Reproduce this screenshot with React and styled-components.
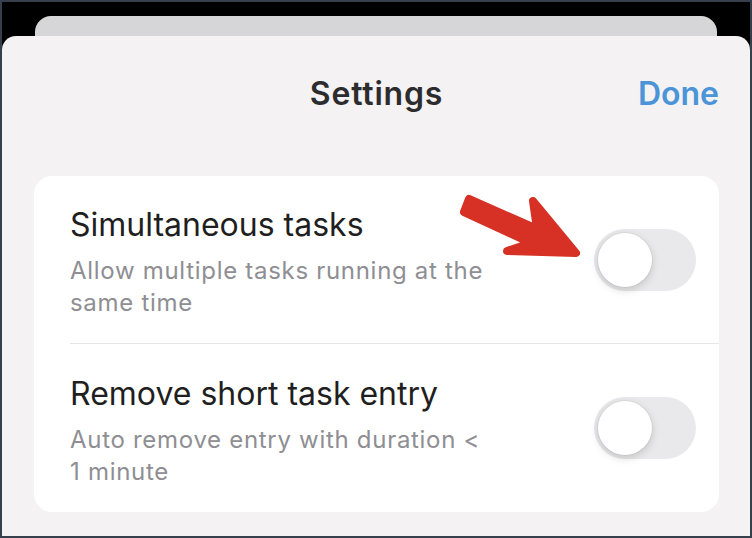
import styled, { createGlobalStyle } from "styled-components";

const GlobalStyle = createGlobalStyle`
  html, body { margin: 0; padding: 0; background: #36404c; }
  body { font-family: Inter, "Noto Sans", sans-serif; -webkit-font-smoothing: antialiased; }
`;

const Frame = styled.div`
  width: 752px; height: 538px; box-sizing: border-box;
  border: 2px solid #36404c;
  background: #000;
  display: flex; flex-direction: column;
  overflow: hidden;
`;

const BackCard = styled.div`
  height: 20px; margin: 14px 33px 0 33px;
  background: #d6d6d8;
  border-radius: 16px 16px 0 0;
`;

const Sheet = styled.div`
  flex: 1;
  background: #f4f2f3;
  border-radius: 14px 14px 0 0;
  padding: 0 31px 0 32px;
`;

const Header = styled.div`
  height: 114px;
  display: grid;
  grid-template-columns: 1fr auto 1fr;
  align-items: center;
  font-size: 32px; font-weight: 600;
  h1 { margin: 0; font-size: inherit; font-weight: inherit; color: #2c2c2e; letter-spacing: 0.8px; }
`;

const DoneButton = styled.button`
  justify-self: end;
  border: 0; background: none; padding: 0;
  font: inherit; color: #4b94d8; cursor: pointer;
`;

const Card = styled.div`
  position: relative;
  margin-top: 26px;
  background: #fff;
  border-radius: 18px;
  overflow: hidden;
`;

const Row = styled.div`
  height: 168px; box-sizing: border-box;
  margin-left: 36px; padding-right: 23px;
  display: flex; align-items: center; justify-content: space-between;
  border-bottom: ${p => (p.$last ? "none" : "1.5px solid #e6e6e8")};
`;

const Texts = styled.div`
  width: 420px;
  padding-top: 7px;
`;

const Title = styled.div`
  font-size: 32px; line-height: 36px; color: #1f1f21;
  margin-bottom: 12px;
`;

const Subtitle = styled.div`
  font-size: 24px; line-height: 32px; color: #8e8e93;
  letter-spacing: 0.7px;
`;

const Toggle = styled.div`
  width: 102px; height: 62px; flex: none;
  border-radius: 31px;
  background: #e9e9eb;
  display: flex; align-items: center;
  padding: 0 4px; box-sizing: border-box;
  span {
    width: 54px; height: 54px; border-radius: 50%;
    background: #fff;
    box-shadow: 0 3px 8px rgba(0,0,0,0.16), 0 0 0 1px rgba(0,0,0,0.04);
  }
`;

const Arrow = styled.svg`
  position: absolute;
  left: 426px; top: 18px;
  width: 122px; height: 64px;
`;

const settings = [
  { title: "Simultaneous tasks", desc: "Allow multiple tasks running at the same time" },
  { title: "Remove short task entry", desc: "Auto remove entry with duration < 1 minute" },
];

export default function App() {
  return (
    <>
      <GlobalStyle />
      <Frame>
        <BackCard />
        <Sheet>
          <Header>
            <span />
            <h1>Settings</h1>
            <DoneButton>Done</DoneButton>
          </Header>
          <Card>
            {settings.map((s, i) => (
              <Row key={s.title} $last={i === settings.length - 1}>
                <Texts>
                  <Title>{s.title}</Title>
                  <Subtitle>{s.desc}</Subtitle>
                </Texts>
                <Toggle><span /></Toggle>
              </Row>
            ))}
            <Arrow viewBox="460 194 122 64">
              <polygon
                points="469,199 537,229 533,201 576,253 507,251 531,243 464,212"
                fill="#d63124" stroke="#d63124" strokeWidth="8" strokeLinejoin="round"
              />
            </Arrow>
          </Card>
        </Sheet>
      </Frame>
    </>
  );
}
